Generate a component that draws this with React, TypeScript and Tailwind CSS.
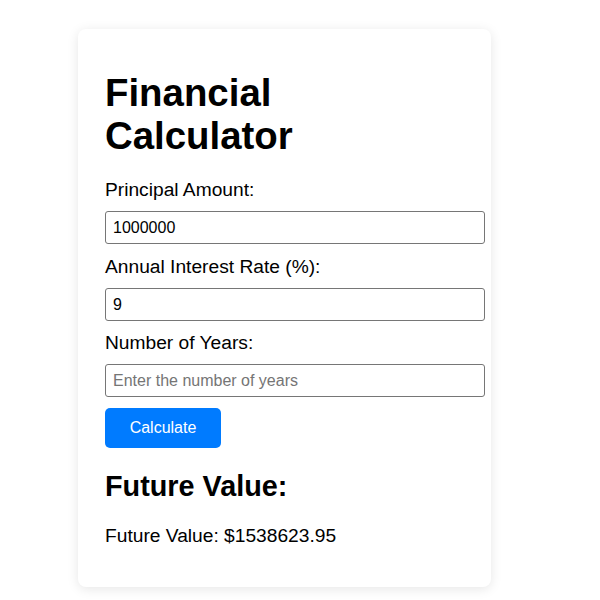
import { useState } from "react";

export default function App() {
    const [principal, setPrincipal] = useState("1000000");
    const [rate, setRate] = useState("9");
    const [years, setYears] = useState("");

    return (
        <div className="min-h-[600px] bg-white pl-[78px] pt-[29px] font-['Liberation_Sans',Arial,sans-serif] text-black">
            <div className="w-[413px] rounded-[8px] bg-white px-[27px] pt-[42px] pb-[40px] shadow-[0_2px_12px_rgba(0,0,0,0.1)]">
                <h1 className="text-[38.4px] font-bold leading-[1.12]">Financial Calculator</h1>

                <div className="mt-[22px] flex flex-col">
                    <label className="text-[19.2px] leading-[22px]">Principal Amount:</label>
                    <input
                        type="number"
                        value={principal}
                        onChange={(e) => setPrincipal(e.target.value)}
                        className="mt-[10px] h-[33px] w-[380px] rounded-[3px] border border-[#767676] px-[7px] text-[16px] outline-none"
                    />

                    <label className="mt-[12px] text-[19.2px] leading-[22px]">Annual Interest Rate (%):</label>
                    <input
                        type="number"
                        value={rate}
                        onChange={(e) => setRate(e.target.value)}
                        className="mt-[10px] h-[33px] w-[380px] rounded-[3px] border border-[#767676] px-[7px] text-[16px] outline-none"
                    />

                    <label className="mt-[11px] text-[19.2px] leading-[22px]">Number of Years:</label>
                    <input
                        type="number"
                        value={years}
                        placeholder="Enter the number of years"
                        onChange={(e) => setYears(e.target.value)}
                        className="mt-[10px] h-[33px] w-[380px] rounded-[3px] border border-[#767676] px-[7px] text-[16px] outline-none placeholder:text-[#757575]"
                    />

                    <button className="mt-[11px] h-[40px] w-[116px] rounded-[5px] bg-[#007bff] text-[16px] text-white">
                        Calculate
                    </button>
                </div>

                <h2 className="mt-[22px] text-[28.8px] font-bold leading-[33px]">Future Value:</h2>
                <p className="mt-[22px] text-[19.2px] leading-[22px]">Future Value: $1538623.95</p>
            </div>
        </div>
    );
}
